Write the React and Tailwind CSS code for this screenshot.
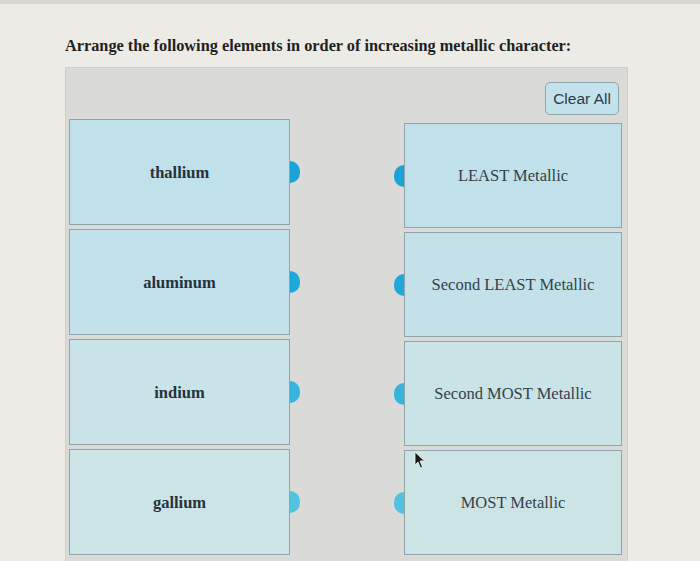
// Drag-and-drop ordering question: elements on the left, ranked slots on the right
const ELEMENTS = [
  { name: 'thallium', bg: 'bg-[#c0e0ea]', tab: 'bg-[#1ba3d8]' },
  { name: 'aluminum', bg: 'bg-[#c3e1ea]', tab: 'bg-[#1fa8da]' },
  { name: 'indium', bg: 'bg-[#c9e3e8]', tab: 'bg-[#36b4dc]' },
  { name: 'gallium', bg: 'bg-[#cce4e6]', tab: 'bg-[#52c2e0]' },
];

const SLOTS = [
  { label: 'LEAST Metallic', bg: 'bg-[#c0e0ea]', tab: 'bg-[#1ba3d8]' },
  { label: 'Second LEAST Metallic', bg: 'bg-[#c4e1e9]', tab: 'bg-[#1fa8da]' },
  { label: 'Second MOST Metallic', bg: 'bg-[#c9e3e6]', tab: 'bg-[#36b4dc]' },
  { label: 'MOST Metallic', bg: 'bg-[#cde4e5]', tab: 'bg-[#52c2e0]' },
];

function Cursor() {
  return (
    <svg className="absolute left-[9px] top-0" width="12" height="18" viewBox="0 0 12 18">
      <path d="M1 1 L1 14 L4 11 L6.5 17 L8.5 16 L6 10 L10.5 10 Z" fill="#1a1a1a" stroke="#f5f5f5" strokeWidth="0.8" />
    </svg>
  );
}

export default function App() {
  return (
    <div
      className="w-[700px] h-[561px] overflow-hidden bg-[#ecebe6] relative"
      style={{ fontFamily: '"Liberation Serif", "Times New Roman", serif' }}
    >
      <div className="h-[4px] bg-[#d6d6d3]" />

      {/* Question */}
      <h1 className="ml-[65px] mt-[32px] text-[16.3px] leading-[20px] font-bold text-[#1f1f1f]">
        Arrange the following elements in order of increasing metallic character:
      </h1>

      {/* Panel */}
      <div className="ml-[65px] mt-[11px] w-[563px] h-[520px] bg-[#dadad8] border border-[#cfcfcc] px-[3px] pt-[14px]">
        <div className="flex justify-end pr-[5px]">
          <button
            className="h-[33px] w-[74px] rounded-[5px] bg-[#c4e2ec] border border-[#8ea5ae] text-[15.5px] text-[#2a3a46]"
            style={{ fontFamily: '"Liberation Sans", Arial, sans-serif' }}
          >
            Clear All
          </button>
        </div>

        <div className="flex justify-between mt-[4px]">
          {/* Left column: draggable elements */}
          <div className="flex flex-col gap-[4px] w-[221px]">
            {ELEMENTS.map(e => (
              <div
                key={e.name}
                className={`relative h-[106px] ${e.bg} border border-[#8fa4ab] flex items-center justify-center pt-[3px]`}
              >
                <span className="text-[16.5px] font-bold text-[#26323b]">{e.name}</span>
                <span className={`absolute -right-[11px] top-1/2 -translate-y-1/2 w-[10px] h-[22px] rounded-r-full ${e.tab}`} />
              </div>
            ))}
          </div>

          {/* Right column: ranked slots */}
          <div className="flex flex-col gap-[4px] w-[218px] pt-[4px] mr-[2px]">
            {SLOTS.map((s, i) => (
              <div
                key={s.label}
                className={`relative h-[105px] ${s.bg} border border-[#8fa4ab] flex items-center justify-center pt-[2px]`}
              >
                <span className="text-[16.5px] text-[#33414b]">{s.label}</span>
                <span className={`absolute -left-[11px] top-1/2 -translate-y-1/2 w-[10px] h-[22px] rounded-l-full ${s.tab}`} />
                {i === 3 && <Cursor />}
              </div>
            ))}
          </div>
        </div>
      </div>
    </div>
  );
}
